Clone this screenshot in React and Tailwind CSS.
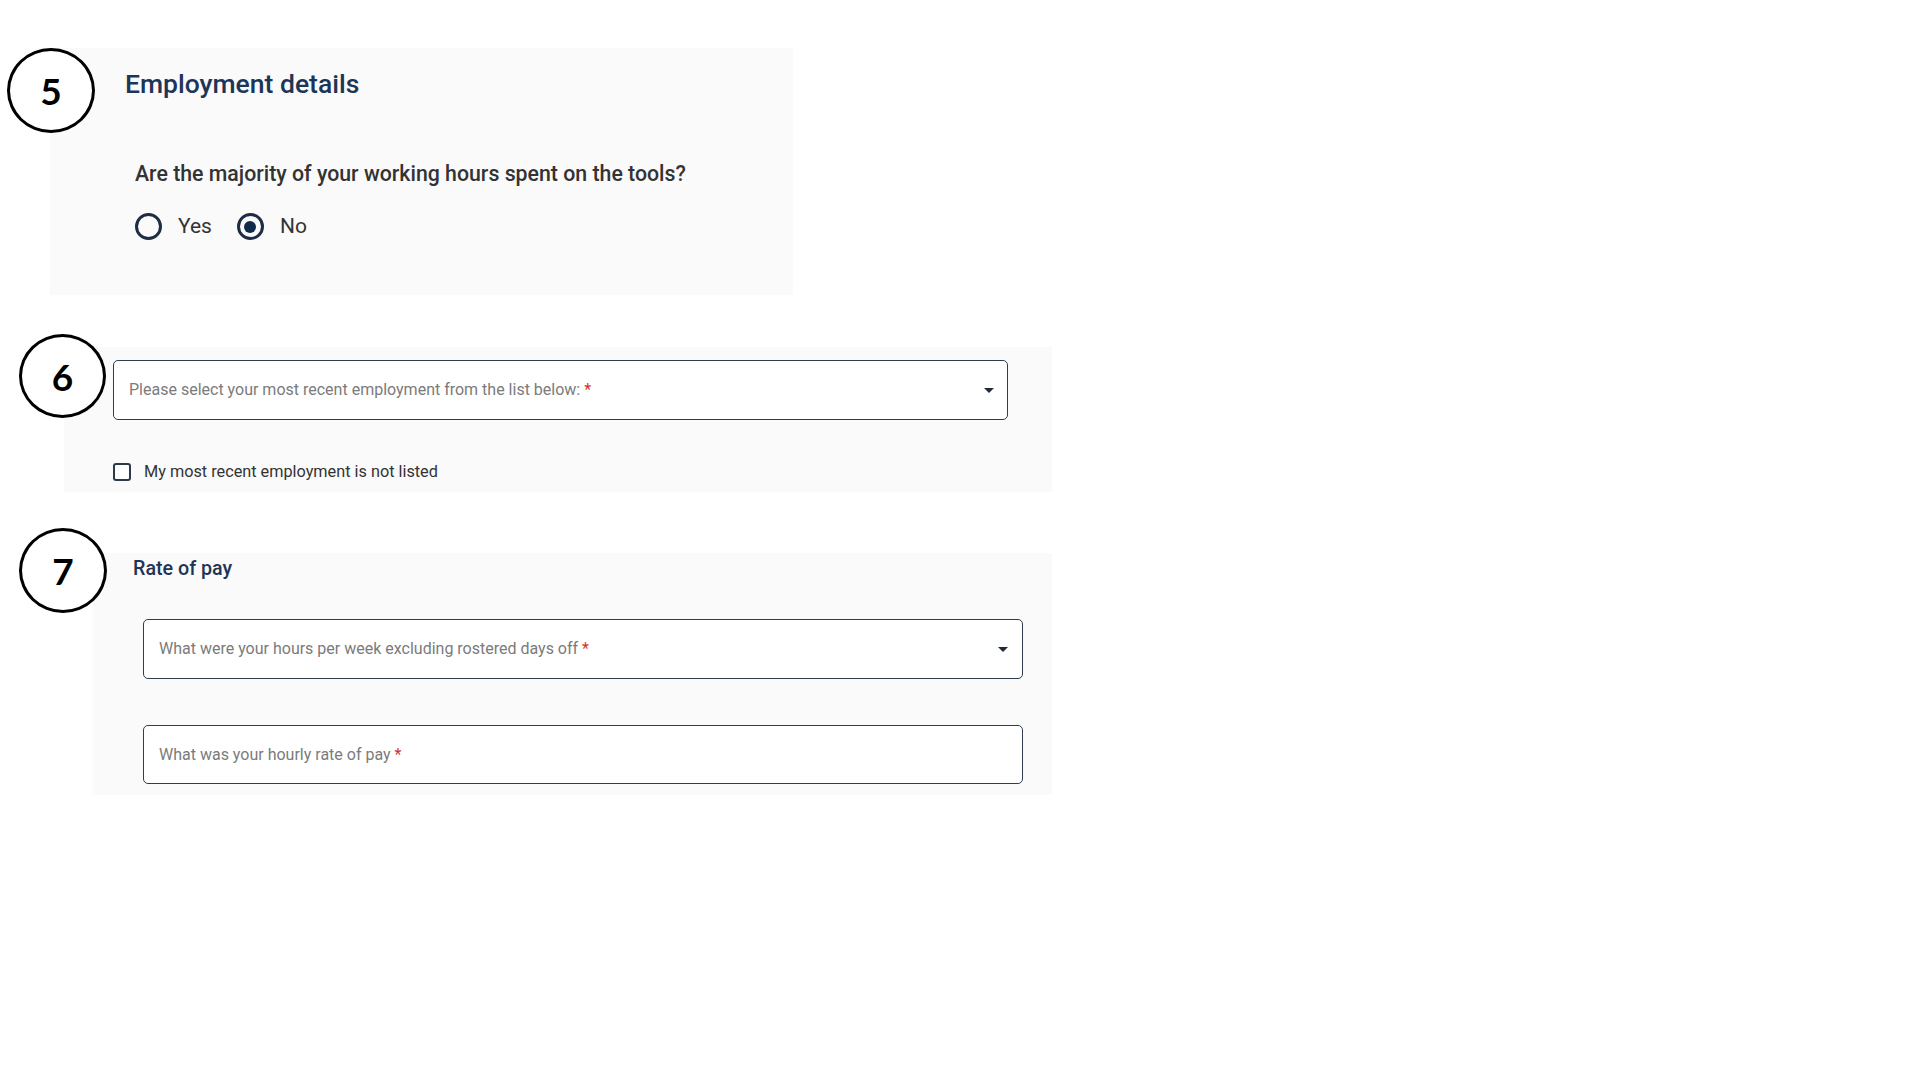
import React from "react";

const font = { fontFamily: "Roboto, 'Liberation Sans', sans-serif" };

function Badge({ n, className }) {
  return (
    <div
      className={`absolute flex items-center justify-center rounded-[50%] border-[3px] border-black bg-white text-[37px] font-bold leading-none text-black ${className}`}
      style={{ fontFamily: "Lato, 'Open Sans', sans-serif" }}
    >
      {n}
    </div>
  );
}

function Caret() {
  return (
    <svg width="10" height="5" viewBox="0 0 10 5" className="shrink-0">
      <path d="M0 0 L10 0 L5 5 Z" fill="#1f2a37" />
    </svg>
  );
}

function Radio({ checked }) {
  return (
    <span className="flex h-[27px] w-[27px] shrink-0 items-center justify-center rounded-full border-[3px] border-[#1c2d44]">
      {checked && <span className="h-[12px] w-[12px] rounded-full bg-[#102a4c]" />}
    </span>
  );
}

function Field({ label, select, className }) {
  return (
    <div
      className={`flex items-center justify-between rounded-[5px] border-[1.5px] border-[#2f3d4c] bg-white pl-[15px] ${className}`}
    >
      <span className="text-[16px] leading-[20px] text-[#7b7b7b]">
        {label}
        <span className="text-[#d32f2f]">*</span>
      </span>
      {select && <Caret />}
    </div>
  );
}

export default function App() {
  return (
    <div className="relative h-[1080px] w-[1920px] overflow-hidden bg-white pt-[48px]" style={font}>
      {/* Section 5 */}
      <div className="relative">
        <div className="ml-[50px] h-[247px] w-[743px] bg-[#fafafa] pl-[75px] pt-[19px]">
          <h2 className="text-[26.5px] font-medium leading-[34px] text-[#1d3557]">Employment details</h2>
          <div className="ml-[10px] mt-[61px]">
            <p className="text-[21.3px] font-medium leading-[24px] text-[#333333]">
              Are the majority of your working hours spent on the tools?
            </p>
            <div className="mt-[27px] flex items-center text-[21px] leading-[25px] text-[#333333]">
              <Radio />
              <span className="ml-[16px]">Yes</span>
              <span className="ml-[25px]">
                <Radio checked />
              </span>
              <span className="ml-[16px]">No</span>
            </div>
          </div>
        </div>
        <Badge n="5" className="left-[7px] top-0 h-[85px] w-[88px]" />
      </div>

      {/* Section 6 */}
      <div className="relative mt-[52px]">
        <div className="ml-[64px] h-[145px] w-[988px] bg-[#fafafa] pl-[49px] pt-[13px]">
          <Field
            select
            label="Please select your most recent employment from the list below: "
            className="h-[60px] w-[895px] pr-[13px]"
          />
          <div className="mt-[42px] flex items-center">
            <span className="h-[18px] w-[18px] shrink-0 rounded-[3px] border-[2.5px] border-[#2c3a4c] bg-white" />
            <span className="ml-[13px] text-[16.25px] leading-[20px] text-[#333333]">
              My most recent employment is not listed
            </span>
          </div>
        </div>
        <Badge n="6" className="left-[19px] top-[-13px] h-[84px] w-[87px]" />
      </div>

      {/* Section 7 */}
      <div className="relative mt-[61px]">
        <div className="ml-[93px] h-[242px] w-[959px] bg-[#fafafa] pl-[40px] pt-[4px]">
          <h3 className="text-[19.7px] font-medium leading-[23px] text-[#1d3557]">Rate of pay</h3>
          <div className="ml-[10px] mt-[39px] flex flex-col gap-[46px]">
            <Field
              select
              label="What were your hours per week excluding rostered days off "
              className="h-[60px] w-[880px] pr-[14px]"
            />
            <Field label="What was your hourly rate of pay " className="h-[59px] w-[880px]" />
          </div>
        </div>
        <Badge n="7" className="left-[19px] top-[-25px] h-[85px] w-[88px]" />
      </div>
    </div>
  );
}
